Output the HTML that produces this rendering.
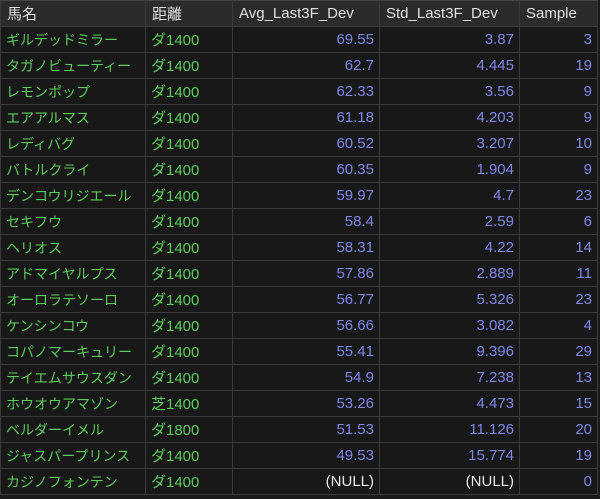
<!DOCTYPE html>
<html><head><meta charset="utf-8"><style>
html,body{margin:0;padding:0;background:#1a1a1a;width:600px;height:499px;overflow:hidden}
table{border-collapse:collapse;table-layout:fixed;position:absolute;left:0;top:0;font-family:"Liberation Sans","Noto Sans CJK JP",sans-serif;font-size:15px}
td,th{border:1px solid #3a3a3a;height:25px;padding:0 5px;white-space:nowrap;overflow:hidden;box-sizing:border-box}
th{background:#2b2b2b;color:#e0e0e0;font-weight:normal;text-align:left;padding-left:6px;height:26px;border-top:1px solid #444}
td{background:#181818;color:#5ccc5c;height:26px}
td:first-child{font-size:14px}
td.n{color:#7f86e8;text-align:right}
td.x{color:#e8e8e8;text-align:right}
</style></head><body>
<table>
<colgroup><col style="width:145px"><col style="width:87px"><col style="width:147px"><col style="width:140px"><col style="width:78px"></colgroup>
<tr><th>馬名</th><th>距離</th><th>Avg_Last3F_Dev</th><th>Std_Last3F_Dev</th><th>Sample</th></tr>
<tr><td>ギルデッドミラー</td><td>ダ1400</td><td class="n">69.55</td><td class="n">3.87</td><td class="n">3</td></tr>
<tr><td>タガノビューティー</td><td>ダ1400</td><td class="n">62.7</td><td class="n">4.445</td><td class="n">19</td></tr>
<tr><td>レモンポップ</td><td>ダ1400</td><td class="n">62.33</td><td class="n">3.56</td><td class="n">9</td></tr>
<tr><td>エアアルマス</td><td>ダ1400</td><td class="n">61.18</td><td class="n">4.203</td><td class="n">9</td></tr>
<tr><td>レディバグ</td><td>ダ1400</td><td class="n">60.52</td><td class="n">3.207</td><td class="n">10</td></tr>
<tr><td>バトルクライ</td><td>ダ1400</td><td class="n">60.35</td><td class="n">1.904</td><td class="n">9</td></tr>
<tr><td>デンコウリジエール</td><td>ダ1400</td><td class="n">59.97</td><td class="n">4.7</td><td class="n">23</td></tr>
<tr><td>セキフウ</td><td>ダ1400</td><td class="n">58.4</td><td class="n">2.59</td><td class="n">6</td></tr>
<tr><td>ヘリオス</td><td>ダ1400</td><td class="n">58.31</td><td class="n">4.22</td><td class="n">14</td></tr>
<tr><td>アドマイヤルプス</td><td>ダ1400</td><td class="n">57.86</td><td class="n">2.889</td><td class="n">11</td></tr>
<tr><td>オーロラテソーロ</td><td>ダ1400</td><td class="n">56.77</td><td class="n">5.326</td><td class="n">23</td></tr>
<tr><td>ケンシンコウ</td><td>ダ1400</td><td class="n">56.66</td><td class="n">3.082</td><td class="n">4</td></tr>
<tr><td>コパノマーキュリー</td><td>ダ1400</td><td class="n">55.41</td><td class="n">9.396</td><td class="n">29</td></tr>
<tr><td>テイエムサウスダン</td><td>ダ1400</td><td class="n">54.9</td><td class="n">7.238</td><td class="n">13</td></tr>
<tr><td>ホウオウアマゾン</td><td>芝1400</td><td class="n">53.26</td><td class="n">4.473</td><td class="n">15</td></tr>
<tr><td>ベルダーイメル</td><td>ダ1800</td><td class="n">51.53</td><td class="n">11.126</td><td class="n">20</td></tr>
<tr><td>ジャスパープリンス</td><td>ダ1400</td><td class="n">49.53</td><td class="n">15.774</td><td class="n">19</td></tr>
<tr><td>カジノフォンテン</td><td>ダ1400</td><td class="x">(NULL)</td><td class="x">(NULL)</td><td class="n">0</td></tr>
</table>
</body></html>
